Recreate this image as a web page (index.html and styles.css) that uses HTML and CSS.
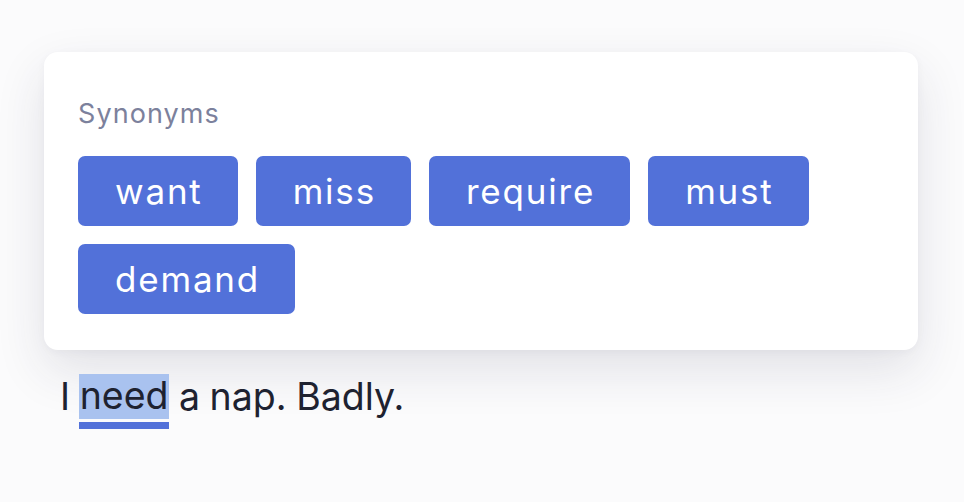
FILE: index.html
```html
<!DOCTYPE html>
<html>
<head>
<meta charset="utf-8">
<link rel="stylesheet" href="styles.css">
</head>
<body>
<div class="stage">
  <div class="card">
    <div class="label">Synonyms</div>
    <div class="chips">
      <span class="chip">want</span>
      <span class="chip">miss</span>
      <span class="chip">require</span>
      <span class="chip">must</span>
      <span class="chip">demand</span>
    </div>
  </div>
  <p class="sentence">I <span class="hl">need</span> a nap. Badly.</p>
</div>
</body>
</html>
```
FILE: styles.css
```css
html, body { margin: 0; padding: 0; }
body {
  background: #fbfbfc;
  font-family: "Inter", "Liberation Sans", sans-serif;
  width: 964px;
  height: 502px;
  overflow: hidden;
}
.stage {
  padding: 52px 46px 0 44px;
}
.card {
  background: #ffffff;
  border-radius: 14px;
  box-shadow: 0 20px 50px rgba(40, 45, 70, 0.12), 0 2px 8px rgba(40, 45, 70, 0.04);
  padding: 44px 35px 36px 34px;
  height: 298px;
  box-sizing: border-box;
}
.label {
  font-size: 27px;
  letter-spacing: 0.04em;
  color: #7c819c;
  line-height: 36px;
  margin-bottom: 24px;
}
.chips {
  display: flex;
  flex-wrap: wrap;
  gap: 18px;
  width: 760px;
}
.chip {
  background: #5271d9;
  color: #fff;
  font-size: 35px;
  letter-spacing: 1.8px;
  line-height: 70px;
  height: 70px;
  padding: 0 35px 0 37px;
  border-radius: 7px;
}
.sentence {
  margin: 24px 0 0 16px;
  font-size: 37.5px;
  color: #1e2230;
  line-height: 46px;
  word-spacing: -1px;
}
.hl {
  display: inline-block;
  line-height: 44px;
  height: 55px;
  vertical-align: top;
  margin-left: -1px;
  padding: 0 1px;
  background:
    linear-gradient(#a9c2ef, #a9c2ef) top / 100% 45px no-repeat,
    linear-gradient(#5271d9, #5271d9) bottom / 100% 7px no-repeat;
}
```
